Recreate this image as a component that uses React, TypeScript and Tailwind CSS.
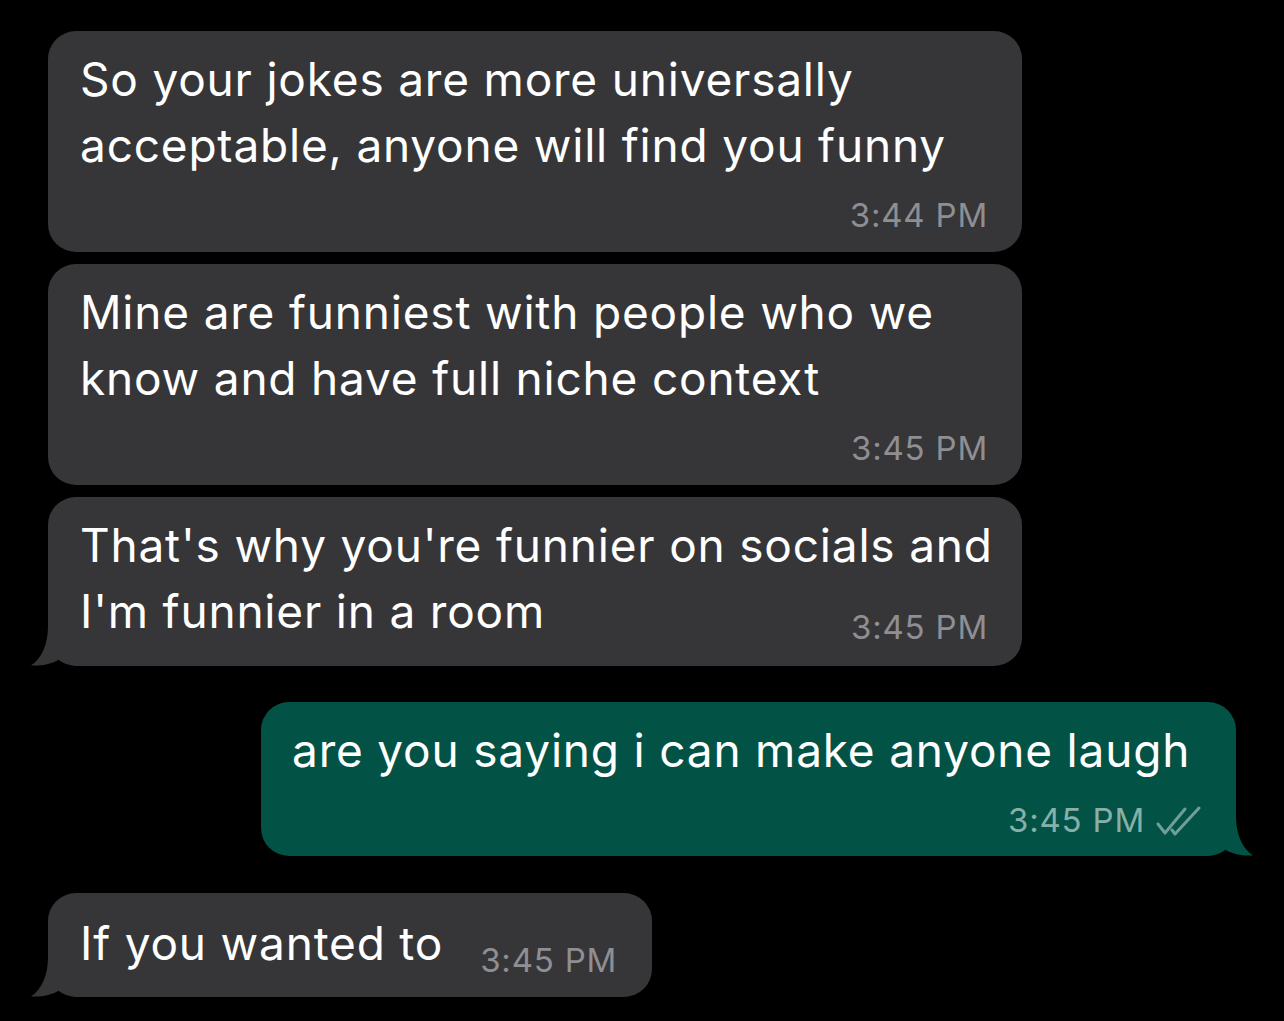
import React from "react";

const font = { fontFamily: "Inter, 'Noto Sans', sans-serif" };

function TailLeft() {
    return (
        <svg className="absolute left-[-18px] bottom-0" width="50" height="40" viewBox="0 0 50 40">
            <path d="M18 0 C18 18 12 32 1 39.5 C12 40 22 38 30 33 C36 37 42 40 50 40 L50 0 Z" fill="#363638" />
        </svg>
    );
}

function TailRight() {
    return (
        <svg className="absolute right-[-18px] bottom-0" width="50" height="40" viewBox="0 0 50 40">
            <path d="M32 0 C32 18 38 32 49 39.5 C38 40 28 38 20 33 C14 37 8 40 0 40 L0 0 Z" fill="#035246" />
        </svg>
    );
}

function Checks() {
    return (
        <svg width="48" height="32" viewBox="0 0 48 32" className="ml-[10px] mb-[2px]">
            <g stroke="#6f9f96" strokeWidth="3" strokeLinecap="round" strokeLinejoin="round" fill="none">
                <path d="M3 18 L10 27 L30 3" />
                <path d="M17 24 L20 28 L44 2" />
            </g>
        </svg>
    );
}

function Time({ t, green }: { t: string; green?: boolean }) {
    return (
        <span className={"text-[33px] leading-[40px] whitespace-nowrap " + (green ? "text-[#86b0a8]" : "text-[#8e8e93]")}>
            {t}
        </span>
    );
}

export default function App() {
    return (
        <div className="w-[1284px] h-[1021px] bg-black overflow-hidden pt-[31px]" style={font}>
            <div className="flex flex-col pl-[48px] gap-[12px]">
                <div className="w-[974px] bg-[#363638] rounded-[28px] pl-[32px] pr-[34px] pt-[15px] pb-[17px] text-white text-[46px] leading-[66px] tracking-[0.8px]">
                    <div>So your jokes are more universally</div>
                    <div>acceptable, anyone will find you funny</div>
                    <div className="flex justify-end mt-[17px]"><Time t="3:44 PM" /></div>
                </div>
                <div className="w-[974px] bg-[#363638] rounded-[28px] pl-[32px] pr-[34px] pt-[15px] pb-[17px] text-white text-[46px] leading-[66px] tracking-[0.8px]">
                    <div>Mine are funniest with people who we</div>
                    <div>know and have full niche context</div>
                    <div className="flex justify-end mt-[17px]"><Time t="3:45 PM" /></div>
                </div>
                <div className="relative w-[974px] bg-[#363638] rounded-[28px] pl-[32px] pr-[34px] pt-[15px] pb-[22px] text-white text-[46px] leading-[66px] tracking-[0.8px]">
                    <div className="whitespace-nowrap">That's why you're funnier on socials and</div>
                    <div className="flex items-end justify-between">
                        <span>I'm funnier in a room</span>
                        <span className="-mb-[11px]"><Time t="3:45 PM" /></span>
                    </div>
                    <TailLeft />
                </div>
            </div>

            <div className="flex justify-end pr-[48px] mt-[36px]">
                <div className="relative w-[975px] bg-[#035246] rounded-[28px] pl-[31px] pr-[33px] pt-[15px] pb-[16px] text-white text-[46px] leading-[66px] tracking-[0.8px]">
                    <div>are you saying i can make anyone laugh</div>
                    <div className="flex justify-end items-end mt-[17px]">
                        <Time t="3:45 PM" green />
                        <Checks />
                    </div>
                    <TailRight />
                </div>
            </div>

            <div className="flex pl-[48px] mt-[37px]">
                <div className="relative bg-[#363638] rounded-[28px] pl-[32px] pr-[35px] pt-[17px] pb-[21px] text-white text-[46px] leading-[66px] tracking-[0.8px] flex items-end gap-[37px]">
                    <span>If you wanted to</span>
                    <span className="-mb-[12px]"><Time t="3:45 PM" /></span>
                    <TailLeft />
                </div>
            </div>
        </div>
    );
}
